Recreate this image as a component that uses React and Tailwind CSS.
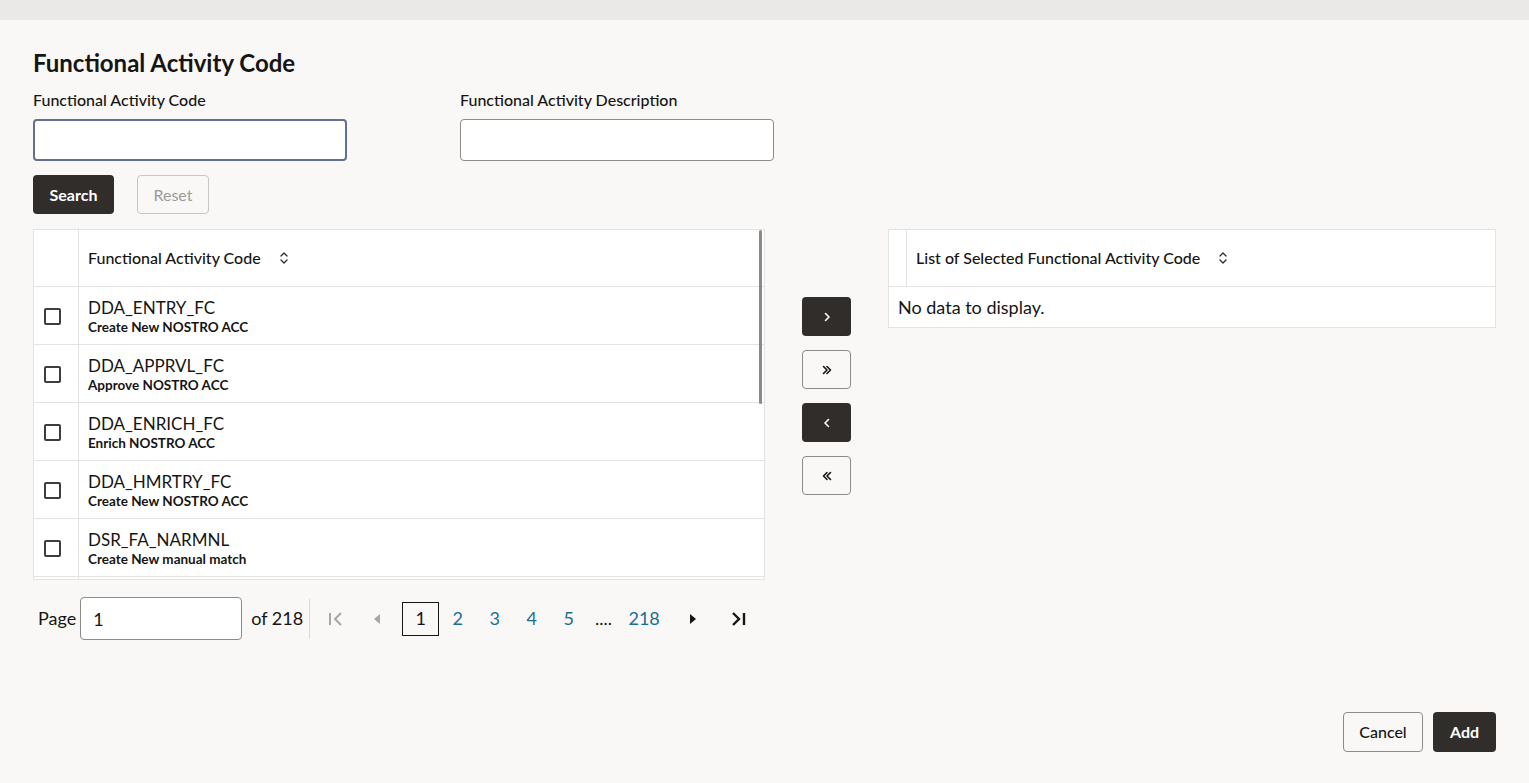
import React from 'react';

const rows = [
  { code: 'DDA_ENTRY_FC', desc: 'Create New NOSTRO ACC' },
  { code: 'DDA_APPRVL_FC', desc: 'Approve NOSTRO ACC' },
  { code: 'DDA_ENRICH_FC', desc: 'Enrich NOSTRO ACC' },
  { code: 'DDA_HMRTRY_FC', desc: 'Create New NOSTRO ACC' },
  { code: 'DSR_FA_NARMNL', desc: 'Create New manual match' },
];

const SortIcon = () => (
  <svg width="10" height="14" viewBox="0 0 10 14" fill="none" stroke="#2b2b2b" strokeWidth="1.3" strokeLinecap="round" strokeLinejoin="round">
    <path d="M2 5l3-3 3 3" />
    <path d="M2 9l3 3 3-3" />
  </svg>
);

const Chevron = ({ dir = 'right', double = false, color }) => (
  <svg width="12" height="12" viewBox="0 0 12 12" fill="none" stroke={color} strokeWidth="1.6" strokeLinecap="round" strokeLinejoin="round">
    {dir === 'right' ? (
      double ? (
        <>
          <path d="M2.5 2.5L6 6l-3.5 3.5" />
          <path d="M6 2.5L9.5 6 6 9.5" />
        </>
      ) : (
        <path d="M4.5 2.5L8 6l-3.5 3.5" />
      )
    ) : double ? (
      <>
        <path d="M6 2.5L2.5 6 6 9.5" />
        <path d="M9.5 2.5L6 6l3.5 3.5" />
      </>
    ) : (
      <path d="M7.5 2.5L4 6l3.5 3.5" />
    )}
  </svg>
);

const Checkbox = () => (
  <div className="w-[17px] h-[17px] border-2 border-[#3d3d3d] rounded-[2px] bg-white" />
);

export default function App() {
  return (
    <div className="min-h-[783px] h-[783px] flex flex-col bg-[#f9f8f6] text-[#161513]" style={{ fontFamily: 'Lato, "Noto Sans", sans-serif' }}>
      <div className="h-[20px] bg-[#eae9e7]" />

      <div className="flex-1 flex flex-col px-[33px] pt-[28px] pb-[31px]">
        <h1 className="text-[24px] leading-[30px] font-bold">Functional Activity Code</h1>

        <div className="flex gap-[113px] mt-[13px]">
          <div>
            <label className="block text-[16px] leading-[18px] font-medium">Functional Activity Code</label>
            <input className="mt-[10px] w-[314px] h-[42px] bg-white border-2 border-[#636f8e] rounded-[4px] outline-none px-3" />
          </div>
          <div>
            <label className="block text-[16px] leading-[18px] font-medium">Functional Activity Description</label>
            <input className="mt-[10px] w-[314px] h-[42px] bg-white border border-[#8d8b88] rounded-[4px] outline-none px-3" />
          </div>
        </div>

        <div className="flex gap-[23px] mt-[14px]">
          <button className="w-[81px] h-[39px] bg-[#312d2a] text-white text-[16px] font-bold rounded-[4px]">Search</button>
          <button className="w-[72px] h-[39px] border border-[#c9c7c4] text-[#9c9a98] text-[16px] rounded-[4px]">Reset</button>
        </div>

        <div className="flex mt-[15px]">
          {/* Left table */}
          <div className="w-[732px] h-[351px] bg-white border border-[#e4e3e1] overflow-hidden relative">
            <div className="flex h-[57px] border-b border-[#e4e3e1]">
              <div className="w-[45px] border-r border-[#e4e3e1]" />
              <div className="flex items-center pl-[9px] gap-[18px] text-[16px] font-medium">
                <span>Functional Activity Code</span>
                <SortIcon />
              </div>
            </div>
            {rows.map((r) => (
              <div key={r.code} className="flex h-[58px] border-b border-[#e4e3e1]">
                <div className="w-[45px] border-r border-[#e4e3e1] flex items-center pl-[10px] pt-[1px]">
                  <Checkbox />
                </div>
                <div className="pl-[9px] flex flex-col justify-center">
                  <div className="text-[17px] leading-[22px] font-normal">{r.code}</div>
                  <div className="text-[13.5px] leading-[16px] font-bold">{r.desc}</div>
                </div>
              </div>
            ))}
            <div className="flex h-[10px]">
              <div className="w-[45px] border-r border-[#e4e3e1]" />
            </div>
            <div className="absolute top-0 right-[2px] w-[3px] h-[174px] bg-[#8b8a88] rounded-full" />
          </div>

          {/* Transfer buttons */}
          <div className="w-[49px] mx-[37px] pt-[68px] flex flex-col gap-[14px]">
            <button className="h-[39px] bg-[#312d2a] rounded-[4px] flex items-center justify-center"><Chevron dir="right" color="#ffffff" /></button>
            <button className="h-[39px] border border-[#8d8b88] rounded-[4px] flex items-center justify-center"><Chevron dir="right" double color="#161513" /></button>
            <button className="h-[39px] bg-[#312d2a] rounded-[4px] flex items-center justify-center"><Chevron dir="left" color="#ffffff" /></button>
            <button className="h-[39px] border border-[#8d8b88] rounded-[4px] flex items-center justify-center"><Chevron dir="left" double color="#161513" /></button>
          </div>

          {/* Right table */}
          <div className="flex-1 self-start bg-white border border-[#e4e3e1]">
            <div className="flex h-[57px] border-b border-[#e4e3e1]">
              <div className="w-[18px] border-r border-[#e4e3e1]" />
              <div className="flex items-center pl-[9px] gap-[18px] text-[16px] font-medium">
                <span>List of Selected Functional Activity Code</span>
                <SortIcon />
              </div>
            </div>
            <div className="h-[40px] flex items-center pl-[9px] text-[18px]">No data to display.</div>
          </div>
        </div>

        {/* Pagination */}
        <div className="flex items-center mt-[17px] h-[43px]">
          <span className="ml-[5px] text-[18px]">Page</span>
          <input defaultValue="1" className="ml-[4px] w-[162px] h-[43px] bg-white border border-[#8d8b88] rounded-[4px] px-3 text-[18px] outline-none" />
          <span className="ml-[9px] text-[18px]">of 218</span>
          <div className="ml-[6px] w-px h-[40px] bg-[#dcdad7]" />
          <div className="flex items-center ml-[17px]">
            <svg width="18" height="18" viewBox="0 0 18 18" fill="none" stroke="#a9a7a4" strokeWidth="2">
              <path d="M3 3v12" />
              <path d="M14 3L8 9l6 6" />
            </svg>
            <svg className="ml-[27px]" width="10" height="14" viewBox="0 0 10 14" fill="#a9a7a4">
              <path d="M8 2v10L2 7z" />
            </svg>
            <div className="ml-[20px] w-[37px] h-[34px] border border-[#161513] flex items-center justify-center text-[18px]">1</div>
            <div className="flex items-center text-[18px] text-[#1c6d93]">
              <span className="w-[37px] text-center">2</span>
              <span className="w-[37px] text-center">3</span>
              <span className="w-[37px] text-center">4</span>
              <span className="w-[37px] text-center">5</span>
              <span className="w-[33px] text-center text-[#161513]">....</span>
              <span className="w-[48px] text-center">218</span>
            </div>
            <svg className="ml-[20px]" width="10" height="14" viewBox="0 0 10 14" fill="#161513">
              <path d="M2 2v10l6-5z" />
            </svg>
            <svg className="ml-[31px]" width="18" height="18" viewBox="0 0 18 18" fill="none" stroke="#161513" strokeWidth="2.4">
              <path d="M4 3l6 6-6 6" />
              <path d="M15 3v12" />
            </svg>
          </div>
        </div>

        <div className="mt-auto flex justify-end gap-[10px]">
          <button className="w-[80px] h-[40px] border border-[#8d8b88] rounded-[4px] text-[16px] font-medium">Cancel</button>
          <button className="w-[63px] h-[40px] bg-[#312d2a] text-white rounded-[4px] text-[16px] font-bold">Add</button>
        </div>
      </div>
    </div>
  );
}
